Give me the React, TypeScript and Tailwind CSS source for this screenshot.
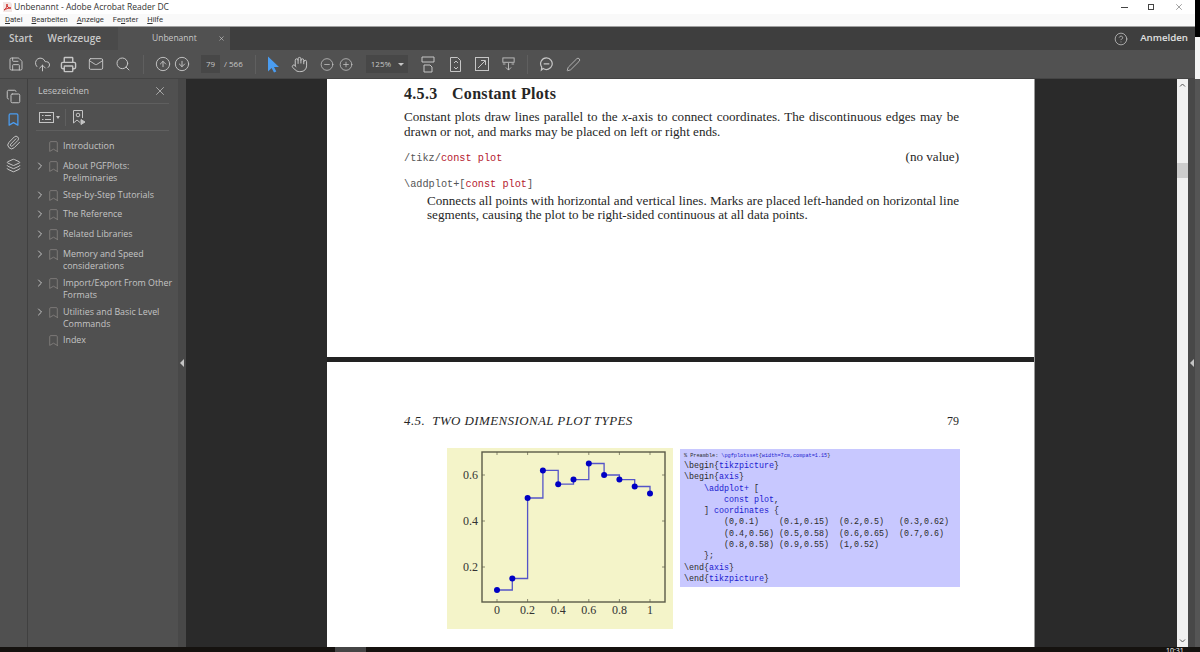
import {
  Bookmark,
  ChevronRight,
  CircleArrowDown,
  CircleArrowUp,
  CircleHelp,
  CircleMinus,
  CirclePlus,
  CloudUpload,
  Copy,
  Hand,
  Layers,
  Mail,
  Paperclip,
  Pen,
  Printer,
  Save,
  Search,
  X,
} from "lucide-react";

const bookmarks = [
  { lines: ["Introduction"], arrow: false },
  { lines: ["About PGFPlots:", "Preliminaries"], arrow: true },
  { lines: ["Step-by-Step Tutorials"], arrow: true },
  { lines: ["The Reference"], arrow: true },
  { lines: ["Related Libraries"], arrow: true },
  { lines: ["Memory and Speed", "considerations"], arrow: true },
  { lines: ["Import/Export From Other", "Formats"], arrow: true },
  { lines: ["Utilities and Basic Level", "Commands"], arrow: true },
  { lines: ["Index"], arrow: false },
];

const points = [
  [0, 0.1],
  [0.1, 0.15],
  [0.2, 0.5],
  [0.3, 0.62],
  [0.4, 0.56],
  [0.5, 0.58],
  [0.6, 0.65],
  [0.7, 0.6],
  [0.8, 0.58],
  [0.9, 0.55],
  [1, 0.52],
];

const px = (v: number) => 50 + 153 * v;
const py = (v: number) => 165 - 230 * v;

const stepPath = points
  .map(([x, y], i) =>
    i === 0 ? `M${px(x)} ${py(y)}` : `H${px(x)} V${py(y)}`
  )
  .join(" ");

const Slot = ({ w, children }: { w: string; children: React.ReactNode }) => (
  <div className={`flex shrink-0 items-center justify-center ${w}`}>{children}</div>
);

const Plot = () => (
  <div className="h-[181px] w-[226px] shrink-0 bg-[#f4f4c9]">
    <svg width="226" height="181" viewBox="0 0 226 181">
      <rect x="35" y="4" width="183" height="150" fill="none" stroke="#5b5b48" strokeWidth="1.4" />
      {[0, 0.2, 0.4, 0.6, 0.8, 1].map((t) => (
        <g key={t}>
          <path d={`M${px(t)} 4v3M${px(t)} 154v-3`} stroke="#5b5b48" strokeWidth="0.7" />
          <text
            x={px(t)}
            y="166"
            textAnchor="middle"
            fontSize="12"
            fill="#333"
            fontFamily="'Liberation Serif', serif"
          >
            {t}
          </text>
        </g>
      ))}
      {[0.2, 0.4, 0.6].map((t) => (
        <g key={t}>
          <path d={`M35 ${py(t)}h3M218 ${py(t)}h-3`} stroke="#5b5b48" strokeWidth="0.7" />
          <text
            x="31"
            y={py(t) + 4}
            textAnchor="end"
            fontSize="12"
            fill="#333"
            fontFamily="'Liberation Serif', serif"
          >
            {t}
          </text>
        </g>
      ))}
      <path d={stepPath} fill="none" stroke="#5454c8" strokeWidth="1.3" />
      {points.map(([x, y]) => (
        <circle key={x} cx={px(x)} cy={py(y)} r="3" fill="#0000c4" />
      ))}
    </svg>
  </div>
);

const Code = () => (
  <pre className="mt-px h-[138px] w-[280px] shrink-0 bg-[#c8c8ff] pl-[4px] pt-[3px] text-[8.33px] leading-[11.3px] text-[#2a2a2a] [font-family:'Liberation_Mono',monospace]">
    <div className="h-[9px] text-[5.2px] leading-[9px]">
      % Preamble: <span className="text-[#2020d0]">\pgfplotsset</span>
      {"{"}
      <span className="text-[#2020d0]">width=7cm,compat=1.15</span>
      {"}"}
    </div>
    <div>
      \begin{"{"}
      <span className="text-[#2020d0]">tikzpicture</span>
      {"}"}
    </div>
    <div>
      \begin{"{"}
      <span className="text-[#2020d0]">axis</span>
      {"}"}
    </div>
    <div>
      {"    "}
      <span className="text-[#2020d0]">\addplot+</span> [
    </div>
    <div>
      {"        "}
      <span className="text-[#2020d0]">const plot</span>,
    </div>
    <div>
      {"    ] "}
      <span className="text-[#2020d0]">coordinates</span> {"{"}
    </div>
    <div>{"        (0,0.1)    (0.1,0.15)  (0.2,0.5)   (0.3,0.62)"}</div>
    <div>{"        (0.4,0.56) (0.5,0.58)  (0.6,0.65)  (0.7,0.6)"}</div>
    <div>{"        (0.8,0.58) (0.9,0.55)  (1,0.52)"}</div>
    <div>{"    };"}</div>
    <div>
      \end{"{"}
      <span className="text-[#2020d0]">axis</span>
      {"}"}
    </div>
    <div>
      \end{"{"}
      <span className="text-[#2020d0]">tikzpicture</span>
      {"}"}
    </div>
  </pre>
);

const Toolbar = () => (
  <div className="flex h-[29px] items-center border-b border-[#444] bg-[#515151] pl-[2px] text-[#c6c6c6]">
    <Slot w="w-[27px]"><Save size={16} strokeWidth={1.4} /></Slot>
    <Slot w="w-[27px]"><CloudUpload size={17} strokeWidth={1.4} /></Slot>
    <Slot w="w-[25px]"><Printer size={17} strokeWidth={2} /></Slot>
    <Slot w="w-[29px]"><Mail size={16} strokeWidth={1.4} /></Slot>
    <Slot w="w-[26px]"><Search size={16} strokeWidth={1.5} /></Slot>
    <div className="ml-[7px] mr-[9px] h-[19px] w-px bg-[#5f5f5f]" />
    <Slot w="w-[19px]"><CircleArrowUp size={16} strokeWidth={1.4} /></Slot>
    <Slot w="w-[19px]"><CircleArrowDown size={16} strokeWidth={1.4} /></Slot>
    <div className="ml-[10px] flex h-[18px] w-[19px] items-center justify-center bg-[#474747] text-[8px]">79</div>
    <span className="ml-[4px] text-[8px]">/ 566</span>
    <div className="ml-[12px] mr-[11px] h-[19px] w-px bg-[#5f5f5f]" />
    <Slot w="w-[13px]">
      <svg width="13" height="17" viewBox="0 0 13 17">
        <path d="M1 0.5v15l3.6-3.4 2.4 4.4 2.3-1.1-2.3-4.4h5z" fill="#4a9cf0" />
      </svg>
    </Slot>
    <Slot w="w-[40px]"><Hand size={17} strokeWidth={1.4} /></Slot>
    <Slot w="w-[14px]"><CircleMinus size={15} strokeWidth={1.3} /></Slot>
    <div className="w-[5px]" />
    <Slot w="w-[14px]"><CirclePlus size={15} strokeWidth={1.3} /></Slot>
    <div className="ml-[13px] flex h-[18px] w-[42px] items-center justify-between bg-[#474747] pl-[5px] pr-[4px] text-[8px]">
      125%
      <span className="h-0 w-0 border-x-[3px] border-t-[3px] border-x-transparent border-t-[#c6c6c6]" />
    </div>
    <Slot w="w-[38px] ml-[1px]">
      <svg width="14" height="17" viewBox="0 0 14 17" fill="none" stroke="currentColor">
        <path d="M1 1h12M1 1v5h12V1M3 9h6l2 2v5H3z" />
      </svg>
    </Slot>
    <Slot w="w-[14px] ml-[2px]">
      <svg width="13" height="15" viewBox="0 0 13 15" fill="none" stroke="currentColor">
        <path d="M1.500 .5h7l3 3v11h-10zM5 6l2-2 2 2M5 10l2 2 2-2" />
      </svg>
    </Slot>
    <Slot w="w-[39px]">
      <svg width="14" height="14" viewBox="0 0 14 14" fill="none" stroke="currentColor">
        <rect x=".5" y=".5" width="13" height="13" />
        <path d="M3 11l7-7M6 3.500h4.500V8" />
      </svg>
    </Slot>
    <Slot w="w-[13px]">
      <svg width="15" height="16" viewBox="0 0 15 16" fill="none" stroke="currentColor">
        <rect x="1" y="1" width="13" height="5" />
        <path d="M7.500 7v8M4.500 12l3 3 3-3M1 8h3M11 8h3" />
      </svg>
    </Slot>
    <div className="ml-[12px] mr-[11px] h-[19px] w-px bg-[#5f5f5f]" />
    <Slot w="w-[15px]">
      <svg width="16" height="16" viewBox="0 0 16 16" fill="none" stroke="currentColor" strokeWidth="1.3">
        <path d="M8 1.500a6.200 6.200 0 1 1-3.500 11.400L2.500 14.500l.4-3.200A6.200 6.200 0 0 1 8 1.500zM5 7.800h6" />
      </svg>
    </Slot>
    <Slot w="w-[39px]"><Pen size={15} strokeWidth={1.3} /></Slot>
  </div>
);

const BookmarksPanel = () => (
  <div className="flex w-[150px] shrink-0 flex-col bg-[#505050] text-[#c4c4c4]">
    <div className="ml-[8px] mr-[9px] flex h-[25px] items-center justify-between border-b border-[#5f5f5f]">
      <span className="ml-[2px] text-[9px]">Lesezeichen</span>
      <X size={14} strokeWidth={1.3} className="mr-[2px]" />
    </div>
    <div className="ml-[8px] mr-[9px] flex h-[27px] items-center border-b border-[#5f5f5f]">
      <svg width="15" height="11" viewBox="0 0 15 11" fill="none" stroke="currentColor" className="ml-[3px]">
        <rect x=".5" y=".5" width="14" height="10" />
        <path d="M3 3.500h1.500M6 3.500h6M3 7.500h1.500M6 7.500h6" />
      </svg>
      <span className="ml-[2px] h-0 w-0 border-x-[2.500px] border-t-[3px] border-x-transparent border-t-[#c4c4c4]" />
      <div className="ml-[5px] h-[17px] w-px bg-[#5f5f5f]" />
      <svg width="14" height="15" viewBox="0 0 14 15" fill="none" stroke="currentColor" className="ml-[6px]">
        <path d="M8 12.500l-3-2.500-3.500 3V.5h9V8" />
        <circle cx="6" cy="5" r="1.800" />
        <path d="M9 9.500l4 2.500-4 2.500z" fill="currentColor" />
      </svg>
    </div>
    <div className="mt-[9px] flex flex-col text-[8.9px] leading-[12.3px]">
      {bookmarks.map((b) => (
        <div
          key={b.lines[0]}
          className={`flex items-start ${b.lines.length > 1 ? "h-[28.800px]" : "h-[19.800px]"}`}
        >
          <div className="flex h-[12px] w-[18px] shrink-0 items-center justify-end">
            {b.arrow && <ChevronRight size={12} strokeWidth={2} />}
          </div>
          <Bookmark size={13} strokeWidth={1.3} className="ml-[1px] shrink-0 text-[#8f8a87]" />
          <div className="ml-[3px] whitespace-nowrap">
            {b.lines.map((l) => (
              <div key={l}>{l}</div>
            ))}
          </div>
        </div>
      ))}
    </div>
  </div>
);

const Page1 = () => (
  <div className="h-[278px] border-b-0 bg-white pl-[77px] pr-[75px] pt-[6px] text-[#262626] [font-family:'Liberation_Serif',serif]">
    <h2 className="flex h-[18px] text-[16px] font-bold leading-[18px] tracking-[0.3px]">
      <span className="w-[48px]">4.5.3</span>
      <span>Constant Plots</span>
    </h2>
    <div className="mt-[7px] text-[13.1px] leading-[14.500px]">
      <p className="whitespace-nowrap [text-align-last:justify]">
        Constant plots draw lines parallel to the <i>x</i>-axis to connect coordinates.  The discontinuous edges may be
      </p>
      <p>drawn or not, and marks may be placed on left or right ends.</p>
    </div>
    <div className="mt-[12.500px] flex h-[14px] items-center justify-between">
      <span className="text-[10.250px] text-[#555] [font-family:'Liberation_Mono',monospace]">
        /tikz/<span className="text-[#b5202f]">const plot</span>
      </span>
      <span className="mb-[3px] text-[13.100px]">(no value)</span>
    </div>
    <div className="mt-[12px] flex h-[14px] items-center text-[10.250px] text-[#555] [font-family:'Liberation_Mono',monospace]">
      <span>
        \addplot+[<span className="text-[#b5202f]">const plot</span>]
      </span>
    </div>
    <div className="ml-[23px] mt-[2px] text-[13.1px] leading-[14.500px]">
      <p className="whitespace-nowrap [text-align-last:justify]">
        Connects all points with horizontal and vertical lines. Marks are placed left-handed on horizontal line
      </p>
      <p>segments, causing the plot to be right-sided continuous at all data points.</p>
    </div>
  </div>
);

const Page2 = () => (
  <div className="mt-[5px] flex-1 bg-white pl-[77px] pr-[75px] pt-[51px] text-[#262626] [font-family:'Liberation_Serif',serif]">
    <div className="flex h-[16px] items-center justify-between text-[13px]">
      <span className="italic tracking-[0.38px]">4.5.{"\u00a0\u00a0"}TWO DIMENSIONAL PLOT TYPES</span>
      <span className="text-[12px]">79</span>
    </div>
    <div className="ml-[43px] mt-[19px] flex gap-[7px]">
      <Plot />
      <Code />
    </div>
  </div>
);

export default function App() {
  return (
    <div className="flex h-[652px] w-[1200px] flex-col overflow-hidden bg-[#15120f] [font-family:'Open_Sans',sans-serif]">
      <div className="flex h-[647px]">
        <div className="flex w-[1195px] flex-col">
          <div className="flex h-[14px] items-center bg-white pl-[3px] text-[8.500px] text-[#333]">
            <svg width="9" height="10" viewBox="0 0 9 10">
              <path d="M0 0h7l2 2v8H0z" fill="#f3e6e4" />
              <path d="M1 8c2-1 3-3 3-6 0 3 1 4 4 4-3 0-5 1-7 2z" fill="none" stroke="#d0312d" />
            </svg>
            <span className="ml-[2px]">Unbenannt - Adobe Acrobat Reader DC</span>
            <div className="ml-auto flex items-center text-[#444]">
              <span className="h-px w-[7px] bg-[#444]" />
              <span className="ml-[20px] h-[6px] w-[6px] border border-[#444]" />
              <X size={10} strokeWidth={1.2} className="ml-[20px] mr-[11px]" />
            </div>
          </div>
          <div className="flex h-[13px] items-center gap-[9px] border-b border-[#a0a0a0] bg-[#f9f9f9] pl-[5px] text-[7.600px] text-[#333] [font-family:'Roboto',sans-serif]">
            <span><u>D</u>atei</span>
            <span><u>B</u>earbeiten</span>
            <span><u>A</u>nzeige</span>
            <span>Fe<u>n</u>ster</span>
            <span><u>H</u>ilfe</span>
          </div>
          <div className="flex h-[23px] items-center bg-[#3e3e3e] text-[#c8c8c8]">
            <div className="flex h-full w-[118px] items-center bg-[#4a4a4a] pl-[9px] text-[10px] font-semibold">
              <span>Start</span>
              <span className="ml-[15px]">Werkzeuge</span>
            </div>
            <div className="flex h-full w-[112px] items-center bg-[#515151] pl-[34px] text-[8.500px]">
              <span>Unbenannt</span>
              <X size={7} strokeWidth={2.2} className="ml-[21px]" />
            </div>
            <CircleHelp size={14} strokeWidth={1.3} className="ml-auto" />
            <span className="ml-[12px] mr-[7px] text-[9.700px] font-semibold text-[#e0e0e0]">Anmelden</span>
          </div>
          <Toolbar />
          <div className="flex min-h-0 flex-1">
            <div className="flex w-[28px] shrink-0 flex-col items-center gap-[8px] border-r border-[#404040] bg-[#505050] pt-[10px] text-[#c4c4c4]">
              <Copy size={15} strokeWidth={1.6} />
              <Bookmark size={15} strokeWidth={2} className="text-[#4a9cf0]" />
              <Paperclip size={15} strokeWidth={1.6} />
              <Layers size={15} strokeWidth={1.6} />
            </div>
            <BookmarksPanel />
            <div className="flex w-[8px] shrink-0 items-center justify-center bg-[#484848]">
              <span className="h-0 w-0 border-y-[4px] border-r-[4px] border-y-transparent border-r-[#c4c4c4]" />
            </div>
            <div className="w-[141px] shrink-0 bg-[#2a2a2a]" />
            <div className="flex w-[708px] shrink-0 flex-col border-r border-[#999] bg-[#222]">
              <Page1 />
              <Page2 />
            </div>
            <div className="w-[142px] shrink-0 bg-[#2a2a2a]" />
            <div className="flex w-[11px] shrink-0 flex-col items-center bg-[#f0f0f0] text-[#555]">
              <svg width="7" height="4" viewBox="0 0 7 4" fill="none" stroke="currentColor" className="mt-[4px]">
                <path d="M1 3.500l2.500-2.500 2.500 2.500" />
              </svg>
              <div className="mt-[76px] h-[15px] w-full bg-[#cdcdcd]" />
              <svg width="7" height="4" viewBox="0 0 7 4" fill="none" stroke="currentColor" className="mb-[4px] mt-auto">
                <path d="M1 .5l2.500 2.500 2.500-2.500" />
              </svg>
            </div>
            <div className="flex w-[7px] shrink-0 items-center justify-center bg-[#484848]">
              <span className="h-0 w-0 border-y-[4px] border-r-[4px] border-y-transparent border-r-[#c4c4c4]" />
            </div>
          </div>
        </div>
        <div className="flex w-[5px] flex-col">
          <div className="h-[37px] bg-black" />
          <div className="h-[42px] bg-[#f4f4f4]" />
          <div className="flex-1 bg-[#555]" />
        </div>
      </div>
      <div className="relative flex h-[5px] overflow-hidden">
        <div className="ml-[335px] h-full w-[31px] bg-[#454545]" />
        <span className="ml-[800px] text-[7px] leading-[7px] text-white">10:31</span>
      </div>
    </div>
  );
}
